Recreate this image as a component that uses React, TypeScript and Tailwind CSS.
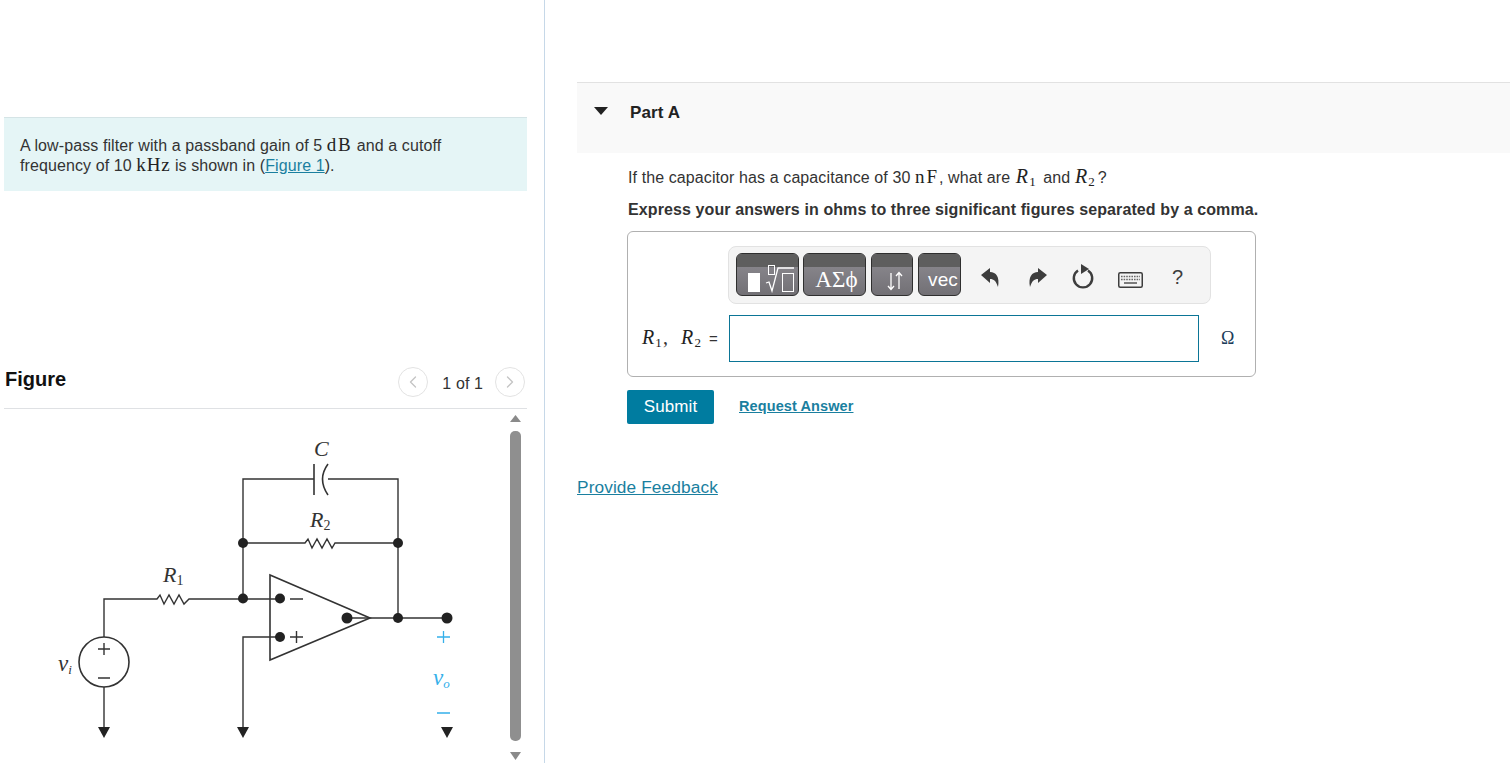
import { ChevronLeft, ChevronRight } from 'lucide-react';

const mathFont = "font-['Liberation_Serif',serif]";

function Sub({ children }: { children: string }) {
    return <span className="relative top-[3px] ml-[1px] text-[13px] not-italic leading-none">{children}</span>;
}

function R({ n }: { n: string }) {
    return (
        <span className={`${mathFont} text-[20px] italic leading-none text-[#222]`}>
            R<Sub>{n}</Sub>
        </span>
    );
}

function Unit({ children, className }: { children: string; className: string }) {
    return <span className={`${mathFont} text-[19px] leading-none text-[#222] ${className}`}>{children}</span>;
}

function Circuit() {
    const ink = '#333';
    return (
        <svg className="block h-[354px] w-[505px] shrink-0" viewBox="4 409 505 354" fill="none">
            <g stroke={ink} strokeWidth="1.4">
                {/* feedback loop */}
                <path d="M243 598V479H314M328 479H398V618" />
                <path d="M314 464V495" strokeWidth="1.6" />
                <path d="M328 464Q317 479 328 495" strokeWidth="1.6" />
                <path d="M243 543H305L308 539L312 548L317 539L322 548L327 539L332 548L335 543H398" />
                {/* input side */}
                <path d="M104 637V599H157L160 595L164 604L169 595L174 604L179 595L184 604L189 599H243H280" />
                <path d="M104 687V727M243 727V637H280" />
                {/* op amp */}
                <path d="M270 575V660L370 618Z" strokeWidth="1.6" />
                <path d="M347 618H447" />
                <circle cx="104" cy="662" r="25" strokeWidth="1.6" />
                <path d="M98 649H110M104 643V655M98 678H110" />
                <path d="M290 599H303M290 637H303M296.5 631V643" />
            </g>
            <g fill="#222">
                <circle cx="243" cy="543" r="5" />
                <circle cx="398" cy="543" r="5" />
                <circle cx="243" cy="598.5" r="5" />
                <circle cx="280" cy="598.5" r="5" />
                <circle cx="280" cy="637" r="5" />
                <circle cx="347" cy="618" r="5.5" />
                <circle cx="398" cy="618" r="5" />
                <circle cx="447" cy="618" r="5.5" />
                <path d="M98 727H110L104 738Z" />
                <path d="M237 727H249L243 738Z" />
                <path d="M441 727H453L447 738Z" />
            </g>
            <g stroke="#35b0ea" strokeWidth="1.3">
                <path d="M437 637H450M443.5 631V643M437 713H450" />
            </g>
            <g fontFamily="'Liberation Serif', serif" fontStyle="italic" fill="#333">
                <text x="314" y="456" fontSize="22">C</text>
                <text x="310" y="527" fontSize="22">R<tspan fontSize="14" fontStyle="normal" dy="3">2</tspan></text>
                <text x="163" y="582" fontSize="22">R<tspan fontSize="14" fontStyle="normal" dy="3">1</tspan></text>
                <text x="58" y="671" fontSize="23">v<tspan fontSize="13" dy="3">i</tspan></text>
                <text x="433" y="685" fontSize="23" fill="#35b0ea">v<tspan fontSize="13" dy="3">o</tspan></text>
            </g>
        </svg>
    );
}

function Scrollbar() {
    return (
        <div className="ml-[1px] flex w-[11px] shrink-0 flex-col items-center">
            <svg className="mt-[6px] block h-[7px] w-[11px]" viewBox="0 0 11 7">
                <path d="M5.5 0L11 7H0Z" fill="#8a8a8a" />
            </svg>
            <div className="mt-[9px] h-[310px] w-[11px] rounded-[5px] bg-[#8f8f8f]" />
            <svg className="mt-[11px] block h-[8px] w-[11px]" viewBox="0 0 11 8">
                <path d="M0 0H11L5.5 8Z" fill="#8a8a8a" />
            </svg>
        </div>
    );
}

function NavButton({ children }: { children: React.ReactNode }) {
    return (
        <div className="flex h-[30px] w-[30px] items-center justify-center rounded-full border border-[#e3e3e3] bg-white text-[#c4c4c4]">
            {children}
        </div>
    );
}

function ToolButton({ className, children }: { className: string; children: React.ReactNode }) {
    return (
        <div className={`relative h-[43px] overflow-hidden rounded-[6px] border border-[#2f2f2f] bg-[linear-gradient(#8f8d93,#727075)] text-white ${className}`}>
            <div className="h-[13px] bg-[#5e5e5e]" />
            <div className="flex h-[28px] items-center justify-center">{children}</div>
        </div>
    );
}

function Toolbar() {
    return (
        <div className="flex h-[58px] w-[483px] items-start rounded-[8px] border border-[#e2e2e2] bg-[#f4f4f4] pl-[7px] pt-[6px]">
            <ToolButton className="w-[63px]">
                <svg className="absolute left-0 top-0 block h-[41px] w-[61px]" viewBox="0 0 61 41" fill="none">
                    <rect x="11" y="19" width="12" height="19" fill="#fff" />
                    <rect x="31.5" y="11.5" width="6" height="9" stroke="#fff" />
                    <path d="M29 29L32 28L35 37L41 14H57" stroke="#fff" strokeWidth="1.3" />
                    <rect x="45.5" y="19.5" width="11" height="18" stroke="#fff" />
                </svg>
            </ToolButton>
            <ToolButton className="ml-[4px] w-[63px]">
                <span className={`${mathFont} -translate-y-[2px] pl-[4px] text-[23px] leading-none`}>ΑΣϕ</span>
            </ToolButton>
            <ToolButton className="ml-[5px] w-[42px]">
                <svg className="block h-[20px] w-[18px] translate-x-[3px]" viewBox="0 0 18 20" fill="none" stroke="#fff" strokeWidth="1.3">
                    <path d="M5 2V18M2 15L5 18.5L8 15" />
                    <path d="M13 18V2M10 5L13 1.5L16 5" />
                </svg>
            </ToolButton>
            <ToolButton className="ml-[5px] w-[43px]">
                <span className="-translate-y-[2px] pl-[7px] text-[19px] leading-none">vec</span>
            </ToolButton>
            <svg className="ml-[19px] mt-[14px] block h-[22px] w-[20px]" viewBox="0 0 20 22">
                <path d="M1 8L10 1V5C16 5 20 10 18 20C16 14 14 12 10 12V16Z" fill="#3d3d3d" />
            </svg>
            <svg className="ml-[28px] mt-[14px] block h-[22px] w-[20px]" viewBox="0 0 20 22">
                <path d="M19 8L10 1V5C4 5 0 10 2 20C4 14 6 12 10 12V16Z" fill="#3d3d3d" />
            </svg>
            <svg className="ml-[23px] mt-[11px] block h-[26px] w-[24px]" viewBox="0 0 24 26" fill="none">
                <path d="M7 6.5A9.2 9.2 0 1 0 17 6.5" stroke="#3d3d3d" strokeWidth="2.4" />
                <path d="M10 0L18 5L10 10Z" fill="#3d3d3d" />
            </svg>
            <svg className="ml-[23px] mt-[19px] block h-[16px] w-[25px]" viewBox="0 0 25 16" fill="none">
                <rect x="0.75" y="0.75" width="23.5" height="14.5" rx="1.5" fill="#f4f4f4" stroke="#3d3d3d" strokeWidth="1.5" />
                <path d="M3 4.5H22M3 7.5H22" stroke="#666" strokeWidth="1.4" strokeDasharray="1.6 1" />
                <path d="M6 11H19" stroke="#555" strokeWidth="1.5" />
            </svg>
            <span className="ml-[29px] mt-[10px] text-[20px] leading-[28px] text-[#3d3d3d]">?</span>
        </div>
    );
}

export default function App() {
    const link = 'text-[#1a7f9f] underline';
    return (
        <div className="flex h-[763px] w-[1510px] overflow-hidden bg-white font-['Liberation_Sans',Arial,sans-serif] text-[16px] tracking-[0.1px] text-[#333]">
            {/* left column */}
            <div className="flex h-full w-[545px] shrink-0 flex-col border-r border-[#c6d8e8] pl-[4px] pr-[17px] pt-[117px]">
                <div className="h-[74px] border-t border-[#d5e4e6] bg-[#e5f5f6] pl-[16px] pr-[60px] pt-[17px] leading-[20px]">
                    <p className="h-[20px] whitespace-nowrap">
                        A low-pass filter with a passband gain of 5 <Unit className="tracking-[1.6px]">dB</Unit> and a cutoff
                    </p>
                    <p className="h-[20px] whitespace-nowrap">
                        frequency of 10 <Unit className="tracking-[0.8px]">kHz</Unit> is shown in (<span className={link}>Figure 1</span>).
                    </p>
                </div>
                <div className="mt-[174px] flex h-[44px] items-start justify-between border-b border-[#dfe1e4]">
                    <h2 className="ml-[1px] mt-[1px] text-[20px] font-bold leading-[26px] tracking-normal text-[#111]">Figure</h2>
                    <div className="mr-[2px] mt-[2px] flex items-start">
                        <NavButton>
                            <ChevronLeft size={20} strokeWidth={1.6} />
                        </NavButton>
                        <span className="ml-[14px] mr-[12px] mt-[5px] leading-[24px]">1 of 1</span>
                        <NavButton>
                            <ChevronRight size={20} strokeWidth={1.6} />
                        </NavButton>
                    </div>
                </div>
                <div className="flex">
                    <Circuit />
                    <Scrollbar />
                </div>
            </div>

            {/* right column */}
            <div className="min-w-0 flex-1 pl-[32px] pt-[82px]">
                <div className="flex h-[71px] items-start border-t border-[#e2e2e2] bg-[#f9f9f9] pl-[17px] pt-[17px]">
                    <svg className="mt-[7px] block h-[8px] w-[14px]" viewBox="0 0 14 8">
                        <path d="M0 0H14L7 8Z" fill="#222" />
                    </svg>
                    <h3 className="ml-[22px] mt-[1px] text-[17px] font-bold leading-[24px] text-[#222]">Part A</h3>
                </div>
                <div className="pl-[51px]">
                    <p className="mt-[13px] h-[24px] whitespace-nowrap leading-[24px]">
                        If the capacitor has a capacitance of 30 <Unit className="tracking-[2px]">nF</Unit>, what are{' '}
                        <span className="ml-[1px]">
                            <R n="1" />
                        </span>
                        <span className="ml-[3px]"> and </span>
                        <R n="2" />
                        <span className="ml-[3px]">?</span>
                    </p>
                    <p className="mt-[8px] h-[24px] whitespace-nowrap font-bold leading-[24px]">
                        Express your answers in ohms to three significant figures separated by a comma.
                    </p>
                    <div className="-ml-[1px] mt-[9px] h-[146px] w-[629px] rounded-[6px] border border-[#b0b0b0] pl-[100px] pt-[14px]">
                        <Toolbar />
                        <div className="relative -ml-[86px] mt-[11px] flex items-center">
                            <span className="flex w-[87px] items-baseline whitespace-nowrap">
                                <R n="1" />
                                <span className={`${mathFont} ml-[1px] text-[20px] leading-none`}>,</span>
                                <span className="ml-[13px]">
                                    <R n="2" />
                                </span>
                                <span className="ml-[8px] text-[15px] leading-none">=</span>
                            </span>
                            <div className="h-[47px] w-[470px] border border-[#0b7596] bg-white" />
                            <span className={`${mathFont} ml-[22px] text-[18px] text-[#1c3d5a]`}>Ω</span>
                        </div>
                    </div>
                    <div className="-ml-[1px] mt-[13px] flex items-center">
                        <div className="flex h-[34px] w-[87px] items-center justify-center rounded-[2px] bg-[#007ca0] text-[17px] text-white">
                            Submit
                        </div>
                        <span className={`ml-[25px] text-[14.5px] font-bold ${link}`}>Request Answer</span>
                    </div>
                </div>
                <p className={`mt-[51px] inline-block text-[17.3px] leading-[24px] ${link}`}>Provide Feedback</p>
            </div>
        </div>
    );
}
